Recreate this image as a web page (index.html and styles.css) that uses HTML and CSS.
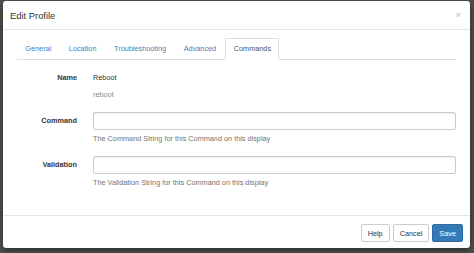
FILE: index.html
```html
<!DOCTYPE html>
<html lang="en">
<head>
    <meta charset="UTF-8">
    <title>Edit Profile</title>
    <link rel="stylesheet" href="styles.css">
</head>
<body>
<div class="modal">
    <!--头部-->
    <div class="modal_header">
        <h4 class="modal_title">Edit Profile</h4>
        <span class="close">&times;</span>
    </div>

    <!--内容-->
    <div class="modal_body">
        <ul class="nav_tabs">
            <li><a href="#">General</a></li>
            <li><a href="#">Location</a></li>
            <li><a href="#">Troubleshooting</a></li>
            <li><a href="#">Advanced</a></li>
            <li class="active"><a href="#">Commands</a></li>
        </ul>

        <div class="form">
            <div class="form_group group_name">
                <label class="label">Name</label>
                <div class="field">
                    <div class="static">Reboot</div>
                    <div class="help muted">reboot</div>
                </div>
            </div>
            <div class="form_group">
                <label class="label label_input">Command</label>
                <div class="field">
                    <input class="input" type="text">
                    <div class="help">The Command String for this Command on this display</div>
                </div>
            </div>
            <div class="form_group">
                <label class="label label_input">Validation</label>
                <div class="field">
                    <input class="input" type="text">
                    <div class="help">The Validation String for this Command on this display</div>
                </div>
            </div>
        </div>
    </div>

    <!--底部-->
    <div class="modal_footer">
        <button class="btn">Help</button>
        <button class="btn">Cancel</button>
        <button class="btn btn_primary">Save</button>
    </div>
</div>
</body>
</html>
```

FILE: styles.css
```css
*{
    margin: 0;
    padding: 0;
    box-sizing: border-box;
}
body{
    background-color: #505050;
    padding: 1px 4px 5px 3px;
    font-family: "Liberation Sans", Arial, sans-serif;
    font-size: 7.3px;
    color: #333;
}
.modal{
    width: 467px;
    height: 247px;
    background-color: #fff;
    border-radius: 3px;
    box-shadow: 0 2px 6px rgba(0,0,0,0.5);
    display: flex;
    flex-direction: column;
}
.modal_header{
    height: 29px;
    padding: 0 9px 0 7px;
    border-bottom: 1px solid #e5e5e5;
    display: flex;
    align-items: center;
    justify-content: space-between;
}
.modal_title{
    font-size: 9.4px;
    font-weight: normal;
    color: #333;
}
.close{
    font-size: 9px;
    font-weight: bold;
    color: #cfcfcf;
    line-height: 10px;
}
.modal_body{
    flex: 1;
    padding: 8px 14px 0;
}
.nav_tabs{
    list-style: none;
    display: flex;
    border-bottom: 1px solid #ddd;
}
.nav_tabs li{
    margin-right: 1px;
    margin-bottom: -1px;
}
.nav_tabs a{
    display: block;
    padding: 4px 7.3px;
    line-height: 12px;
    border: 1px solid transparent;
    border-radius: 2px 2px 0 0;
    color: #3f82bd;
    text-decoration: none;
}
.nav_tabs .active a{
    color: #555;
    background-color: #fff;
    border-color: #ddd #ddd transparent;
}
.form_group{
    display: grid;
    grid-template-columns: 60px 1fr;
    column-gap: 16px;
    margin-top: 12px;
}
.group_name{
    margin-top: 12px;
}
.label{
    text-align: right;
    font-weight: bold;
    line-height: 11px;
}
.label_input{
    line-height: 18px;
}
.static{
    line-height: 11px;
}
.input{
    display: block;
    width: 100%;
    height: 18px;
    border: 1px solid #ccc;
    border-radius: 2px;
    box-shadow: inset 0 1px 1px rgba(0,0,0,0.075);
    font-family: inherit;
    font-size: 7.3px;
}
.help{
    margin-top: 3px;
    line-height: 11px;
    color: #737373;
}
.muted{
    margin-top: 6px;
    color: #8c8c8c;
}
.modal_footer{
    border-top: 1px solid #e5e5e5;
    padding: 8px 7px 6px;
    display: flex;
    justify-content: flex-end;
    gap: 3px;
}
.btn{
    height: 18px;
    padding: 0 6px;
    border: 1px solid #ccc;
    border-radius: 2px;
    background-color: #fff;
    color: #333;
    font-family: inherit;
    font-size: 7.3px;
}
.btn_primary{
    background-color: #337ab7;
    border-color: #2e6da4;
    color: #fff;
}
```
